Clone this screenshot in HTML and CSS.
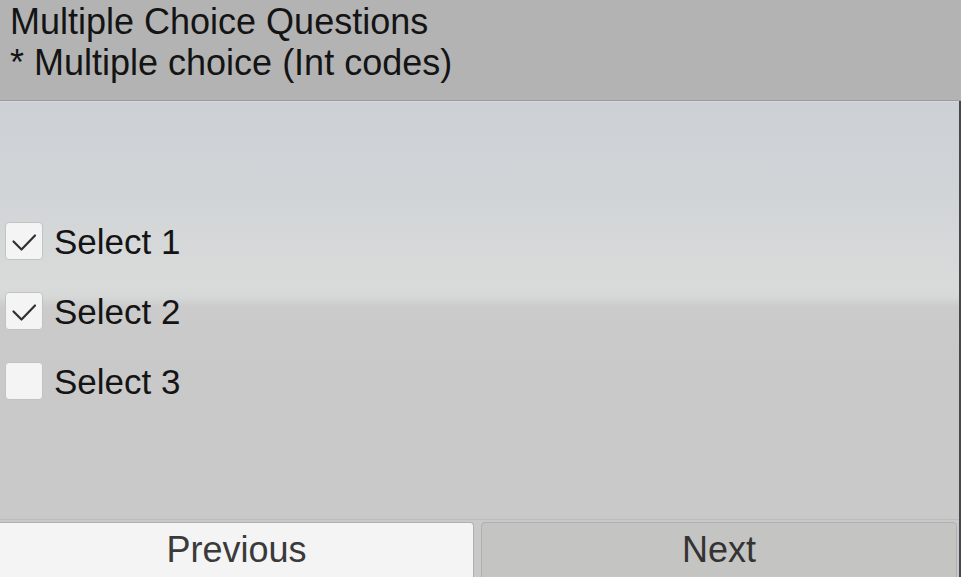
FILE: index.html
```html
<!DOCTYPE html>
<html>
<head>
<meta charset="utf-8">
<link rel="stylesheet" href="styles.css">
</head>
<body>
<div class="app">
  <header class="header">
    <div class="title">Multiple Choice Questions</div>
    <div class="title">* Multiple choice (Int codes)</div>
  </header>
  <div class="body">
    <main class="content">
      <div class="options">
        <label class="option">
          <span class="box checked"><svg viewBox="0 0 38 38" width="38" height="38"><path d="M8.5 19.5 L16.5 27.5 L30 13.5" fill="none" stroke="#303030" stroke-width="2.2" stroke-linecap="round" stroke-linejoin="round"/></svg></span>
          <span class="label">Select 1</span>
        </label>
        <label class="option">
          <span class="box checked"><svg viewBox="0 0 38 38" width="38" height="38"><path d="M8.5 19.5 L16.5 27.5 L30 13.5" fill="none" stroke="#303030" stroke-width="2.2" stroke-linecap="round" stroke-linejoin="round"/></svg></span>
          <span class="label">Select 2</span>
        </label>
        <label class="option">
          <span class="box"></span>
          <span class="label">Select 3</span>
        </label>
      </div>
    </main>
    <footer class="footer">
      <button class="btn btn-prev">Previous</button>
      <button class="btn btn-next">Next</button>
    </footer>
  </div>
</div>
</body>
</html>
```
FILE: styles.css
```css
html, body {
  margin: 0;
  padding: 0;
  height: 100%;
  overflow: hidden;
}
body {
  font-family: "Liberation Sans", Arial, sans-serif;
  background: #c9c9c9;
}
.app {
  display: flex;
  flex-direction: column;
  height: 577px;
  width: 961px;
}
.header {
  background: #b3b3b3;
  padding-left: 10px;
  padding-top: 1px;
  border-bottom: 1px solid #9c9c9c;
  box-sizing: border-box;
  height: 101px;
  color: #141414;
}
.title {
  font-size: 36px;
  line-height: 41px;
  white-space: nowrap;
}
.body {
  flex: 1;
  display: flex;
  flex-direction: column;
  border-right: 2px solid #45474c;
  box-shadow: inset -1px 0 0 #dfe1e3;
  min-height: 0;
}
.content {
  flex: 1;
  background: linear-gradient(to bottom,
    #cdd0d5 0px,
    #d1d4d7 90px,
    #d9dbda 185px,
    #d6d7d7 195px,
    #cbcbcb 205px,
    #c9c9c9 260px,
    #c9c9c9 100%);
  border-top: 1px solid #d6d8dc;
  padding-top: 120px;
  box-sizing: border-box;
}
.options {
  display: flex;
  flex-direction: column;
  gap: 32px;
}
.option {
  display: flex;
  align-items: center;
  height: 38px;
  padding-left: 5px;
  gap: 11px;
}
.box {
  width: 38px;
  height: 38px;
  box-sizing: border-box;
  background: #f4f4f4;
  border: 1px solid #c2c2c2;
  border-radius: 4px;
  position: relative;
}
.box svg {
  position: absolute;
  left: -1px;
  top: -1px;
}
.label {
  font-size: 35px;
  line-height: 38px;
  padding-top: 2px;
  color: #141414;
}
.footer {
  height: 58px;
  display: flex;
  gap: 7px;
  padding-top: 2px;
  border-top: 1px solid #bcbcbc;
  background: #c9c9c9;
  box-sizing: border-box;
}
.btn {
  font-family: "Liberation Sans", Arial, sans-serif;
  font-size: 36px;
  color: #3a3a3a;
  border: 1px solid #b0b0b0;
  border-radius: 4px 4px 0 0;
  height: 60px;
  padding: 7px 0 13px 0;
  line-height: 40px;
  box-sizing: border-box;
  margin: 0;
}
.btn-prev {
  width: 474px;
  background: #f4f4f4;
  border-left: none;
  border-radius: 0 4px 0 0;
}
.btn-next {
  width: 476px;
  background: #c4c4c2;
  color: #333333;
}
```
